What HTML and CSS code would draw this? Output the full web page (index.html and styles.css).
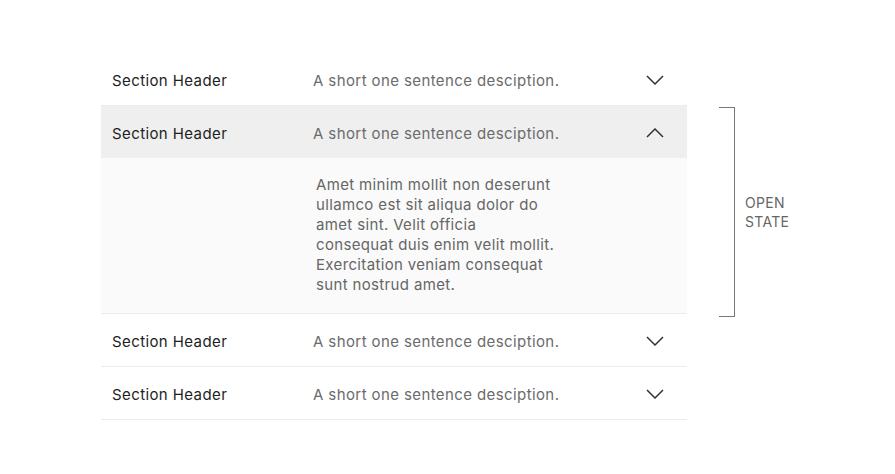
FILE: index.html
```html
<!DOCTYPE html>
<html>
<head>
<meta charset="utf-8">
<link rel="stylesheet" href="styles.css">
</head>
<body>
<div class="page">
  <div class="accordion">
    <div class="item">
      <div class="head">
        <span class="title">Section Header</span>
        <span class="desc">A short one sentence desciption.</span>
        <svg class="chev" width="18" height="10" viewBox="0 0 18 10"><path d="M1 1 L9 9 L17 1" fill="none" stroke="#333" stroke-width="1.5"/></svg>
      </div>
    </div>
    <div class="item open">
      <div class="head">
        <span class="title">Section Header</span>
        <span class="desc">A short one sentence desciption.</span>
        <svg class="chev" width="18" height="10" viewBox="0 0 18 10"><path d="M1 9 L9 1 L17 9" fill="none" stroke="#333" stroke-width="1.5"/></svg>
      </div>
      <div class="panel">
        <p class="body">Amet minim mollit non deserunt ullamco est sit aliqua dolor do amet sint. Velit officia consequat duis enim velit mollit. Exercitation veniam consequat sunt nostrud amet.</p>
      </div>
    </div>
    <div class="item">
      <div class="head">
        <span class="title">Section Header</span>
        <span class="desc">A short one sentence desciption.</span>
        <svg class="chev" width="18" height="10" viewBox="0 0 18 10"><path d="M1 1 L9 9 L17 1" fill="none" stroke="#333" stroke-width="1.5"/></svg>
      </div>
    </div>
    <div class="item">
      <div class="head">
        <span class="title">Section Header</span>
        <span class="desc">A short one sentence desciption.</span>
        <svg class="chev" width="18" height="10" viewBox="0 0 18 10"><path d="M1 1 L9 9 L17 1" fill="none" stroke="#333" stroke-width="1.5"/></svg>
      </div>
    </div>
  </div>
  <div class="note">
    <div class="bracket"></div>
    <div class="label">OPEN<br>STATE</div>
  </div>
</div>
</body>
</html>
```

FILE: styles.css
```css
* { box-sizing: border-box; }
html, body { margin: 0; background: #fff; }
body { font-family: Inter, "Noto Sans", sans-serif; }
.page {
  display: flex;
  align-items: flex-start;
  padding: 53px 0 0 101px;
}
.accordion { width: 586px; }
.item { border-bottom: 1px solid #ececec; }
.head {
  height: 52px;
  display: flex;
  align-items: center;
  padding: 2px 23px 0 11px;
}
.open .head { background: #efefef; }
.title {
  width: 201px;
  font-size: 15px;
  letter-spacing: 0.4px;
  color: #1e1e1e;
}
.desc {
  flex: 1;
  font-size: 15px;
  letter-spacing: 0.4px;
  color: #6b6b6b;
}
.chev { display: block; }
.panel {
  background: #fafafa;
  padding: 17px 0 18px 215px;
}
.body {
  margin: 0;
  width: 240px;
  font-size: 15px;
  letter-spacing: 0.35px;
  line-height: 20px;
  color: #666;
}
.note {
  display: flex;
  align-items: center;
  margin: 54px 0 0 32px;
}
.bracket {
  width: 16px;
  height: 210px;
  border: 1.5px solid #777;
  border-left: none;
}
.label {
  margin-left: 10px;
  font-size: 14px;
  letter-spacing: 0.3px;
  line-height: 19px;
  color: #666;
}
```
